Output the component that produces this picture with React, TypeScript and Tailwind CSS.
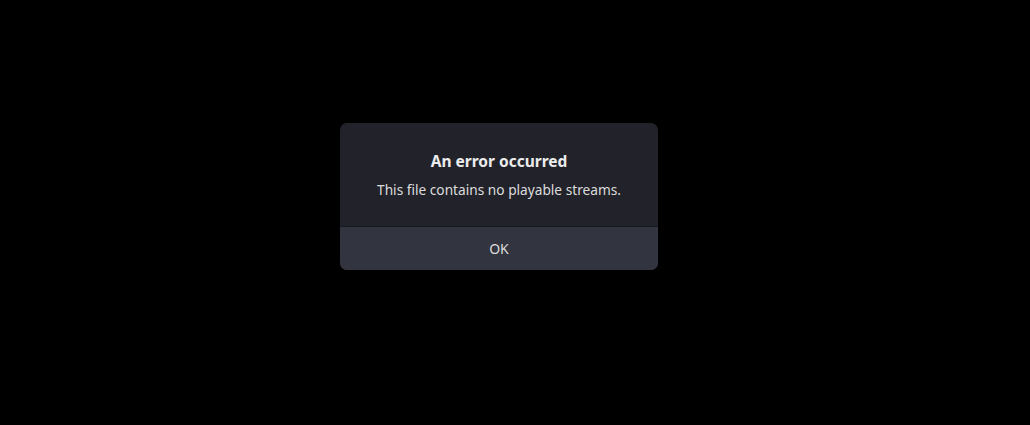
export default function App() {
  return (
    <div className="w-[1030px] h-[425px] bg-black pl-[340px] pt-[123px]" style={{ fontFamily: '"Noto Sans", "Open Sans", sans-serif' }}>
      <div className="w-[318px] rounded-[7px] overflow-hidden bg-[#22232a] flex flex-col">
        <div className="h-[103px] flex flex-col items-center pt-[26px]">
          <div className="h-[24px] leading-[24px] text-[15.5px] font-bold text-[#ececec]">An error occurred</div>
          <div className="mt-[7px] h-[20px] leading-[20px] text-[13.7px] text-[#dcdcdc]">This file contains no playable streams.</div>
        </div>
        <div className="h-px bg-[#18191e]" />
        <button className="h-[43px] bg-[#32343f] text-[14px] text-[#dcdcdc] flex items-center justify-center">OK</button>
      </div>
    </div>
  );
}
